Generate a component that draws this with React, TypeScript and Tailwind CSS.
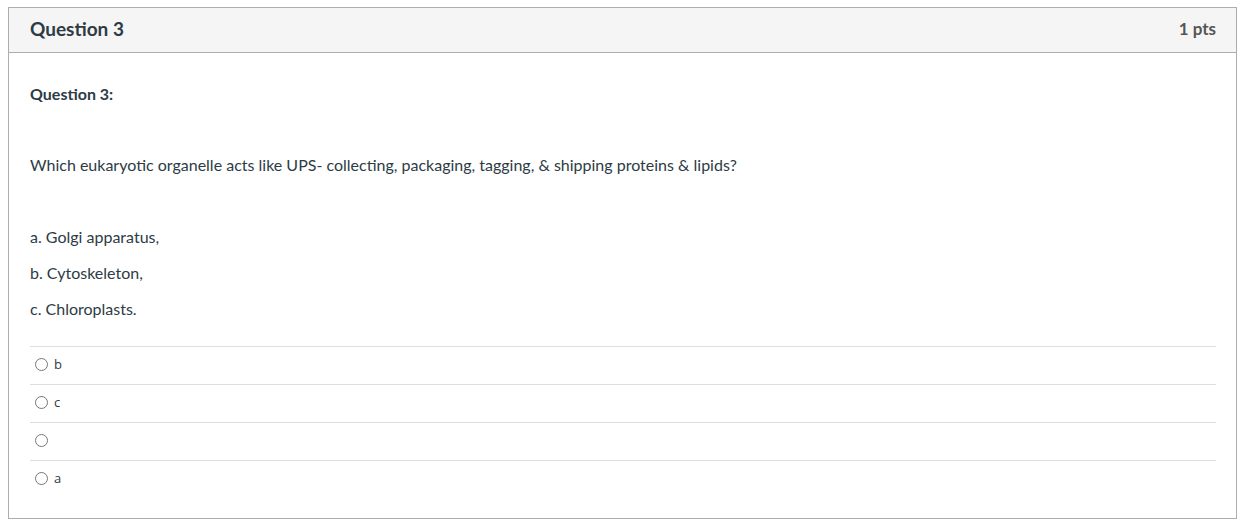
const answers = ["b", "c", "", "a"];

function Radio() {
  return (
    <span className="block h-[13px] w-[13px] shrink-0 rounded-full border border-[#767676] bg-white" />
  );
}

export default function App() {
  return (
    <div className="min-h-[524px] bg-white pl-2 pt-[7px] pr-[11px] font-['Lato',sans-serif] text-[#2d3b45]">
      <div className="border border-[#adadad]">
        <div className="flex h-[45px] items-center justify-between border-b border-[#adadad] bg-[#f5f5f5] pb-[3px] pl-[21px] pr-[20px]">
          <h2 className="text-[19px] font-bold leading-none">Question 3</h2>
          <span className="text-[17px] font-bold leading-none text-[#555]">1 pts</span>
        </div>
        <div className="pl-[21px] pr-[20px] pt-[29px] pb-[20px]">
          <p className="text-[16px] font-bold leading-6">Question 3:</p>
          <p className="mt-[47px] text-[16px] leading-6">
            Which eukaryotic organelle acts like UPS- collecting, packaging, tagging, &amp; shipping proteins &amp; lipids?
          </p>
          <p className="mt-[48px] text-[16px] leading-6">a. Golgi apparatus,</p>
          <p className="mt-[12px] text-[16px] leading-6">b. Cytoskeleton,</p>
          <p className="mt-[12px] text-[16px] leading-6">c. Chloroplasts.</p>
          <div className="mt-[25px]">
            {answers.map((a, i) => (
              <div
                key={i}
                className="flex h-[38px] items-center gap-[6px] border-t border-[#ddd] pb-[2px] pl-[5px] font-['Open_Sans',sans-serif] text-[13px] text-[#2d3b45]"
              >
                <Radio />
                <span>{a}</span>
              </div>
            ))}
          </div>
        </div>
      </div>
    </div>
  );
}
